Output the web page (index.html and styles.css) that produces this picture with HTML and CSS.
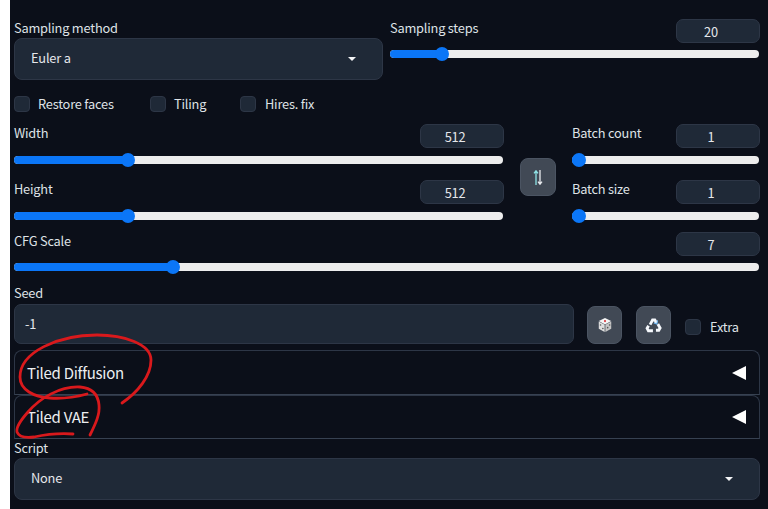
FILE: index.html
```html
<!DOCTYPE html>
<html lang="en">
<head>
<meta charset="utf-8">
<title>txt2img settings</title>
<link rel="stylesheet" href="styles.css">
</head>
<body>
<main class="panel">
  <section class="top-row">
    <div class="method-col">
      <div class="label method-label">Sampling method</div>
      <div class="select"><span>Euler a</span><i class="caret"></i></div>
    </div>
    <div class="steps-col">
      <div class="head"><span class="label">Sampling steps</span><span class="num">20</span></div>
      <div class="slider"><div class="fill" style="width:14.2%"></div></div>
    </div>
  </section>

  <section class="checks">
    <label class="check c1"><i class="box"></i><span class="check-text">Restore faces</span></label>
    <label class="check c2"><i class="box"></i><span class="check-text">Tiling</span></label>
    <label class="check"><i class="box"></i><span class="check-text">Hires. fix</span></label>
  </section>

  <section class="size-row">
    <div class="size-col">
      <div class="head"><span class="label">Width</span><span class="num">512</span></div>
      <div class="slider"><div class="fill" style="width:23.3%"></div></div>
      <div class="head second"><span class="label">Height</span><span class="num">512</span></div>
      <div class="slider"><div class="fill" style="width:23.3%"></div></div>
    </div>
    <button class="tool swap" type="button" aria-label="Swap">
      <svg width="10" height="15" viewBox="0 0 10 15"><path d="M3 15V1M1 3.4 3 .8l2 2.6" fill="none" stroke="#8fe3e6" stroke-width="1.3"/><path d="M7 0v14M5 11.6 7 14.2l2-2.6" fill="none" stroke="#e8eaee" stroke-width="1.3"/></svg>
    </button>
    <div class="batch-col">
      <div class="head"><span class="label">Batch count</span><span class="num">1</span></div>
      <div class="slider"><div class="fill" style="width:0"></div></div>
      <div class="head second"><span class="label">Batch size</span><span class="num">1</span></div>
      <div class="slider"><div class="fill" style="width:0"></div></div>
    </div>
  </section>

  <section class="cfg">
    <div class="head"><span class="label">CFG Scale</span><span class="num">7</span></div>
    <div class="slider cfg-slider"><div class="fill" style="width:21.3%"></div></div>
  </section>

  <section class="seed">
    <div class="seed-col">
      <div class="label">Seed</div>
      <div class="seed-input">-1</div>
    </div>
    <button class="tool dice" type="button" aria-label="Random seed">
      <svg width="16" height="16" viewBox="0 0 18 18">
        <path d="M9 1 16 4.6 9 8.4 2 4.6Z" fill="#f4f4f4"/>
        <path d="M2 5 8.6 8.8V17L2 13.2Z" fill="#dedede"/>
        <path d="M16 5 9.4 8.8V17L16 13.2Z" fill="#c4c4c4"/>
        <circle cx="9" cy="4.6" r="1.2" fill="#d9363e"/>
        <circle cx="4" cy="9" r=".9" fill="#555"/><circle cx="6.6" cy="13" r=".9" fill="#555"/>
        <circle cx="12" cy="12" r=".9" fill="#555"/><circle cx="14.2" cy="9" r=".9" fill="#555"/>
      </svg>
    </button>
    <button class="tool recycle" type="button" aria-label="Reuse seed">
      <svg width="17" height="17" viewBox="0 0 18 18" fill="none" stroke="#f5f8fc" stroke-width="3">
        <path d="M5.4 8 8 3.2h2.4l1.6 2.6"/>
        <path d="M13.6 7.4l2.4 4.2-1.4 2.4h-3"/>
        <path d="M8.4 14.6H3.6L2.2 12l1.6-2.8"/>
        <path d="M13.2 3.6 12.6 7.4 9.4 6.2" stroke="#6fb7f2" stroke-width="1.2" fill="#f5f8fc"/>
      </svg>
    </button>
    <label class="check extra"><i class="box"></i><span class="check-text">Extra</span></label>
  </section>

  <section class="accordion"><span>Tiled Diffusion</span><i class="tri"></i></section>
  <section class="accordion next"><span>Tiled VAE</span><i class="tri"></i></section>

  <section class="script">
    <div class="label">Script</div>
    <div class="select"><span>None</span><i class="caret"></i></div>
  </section>
</main>
<svg class="ink" width="768" height="509" viewBox="0 0 768 509" fill="none" stroke="#d9191c" stroke-linecap="round" aria-hidden="true">
  <path stroke-width="2.8" d="M122 403C138 392 151 376 151 360C151 344 124 335 97 335C58 335 20 352 20 377C20 390 34 397 50 398C64 399 76 397 87 394"/>
  <path stroke-width="2.8" d="M90 435C96 423 100 414 99 405C98 394 92 388 80 387C60 386 40 398 28 412C20 421 16 428 17 432C19 437 26 438 34 437C48 434 60 433 73 434"/>
</svg>
</body>
</html>
```
FILE: styles.css
```css
* { box-sizing: border-box; }
html, body { margin: 0; height: 100%; background: #fff; overflow: hidden; }
body { font-family: "Noto Sans CJK SC", "Noto Sans", sans-serif; color: #e5e7eb; }

.panel {
  margin-left: 10px;
  height: 509px;
  background: #0b0f19;
  padding: 19px 8px 0 4px;
  font-size: 12.8px;
  line-height: 18px;
  letter-spacing: -.2px;
}

.label { color: #dfe2e6; line-height: 17px; }

.top-row { display: flex; gap: 7px; height: 61px; }
.method-col { width: 369px; }
.method-label { margin-bottom: 2px; }
.steps-col { flex: 1; }

.select {
  height: 42px;
  display: flex;
  align-items: center;
  justify-content: space-between;
  padding: 0 26px 2px 16px;
  background: #1f2937;
  border: 1px solid #2d3646;
  border-radius: 8px;
  color: #e5e7eb;
}
.caret { width: 0; height: 0; margin-top: 2px; border: 4px solid transparent; border-top: 4px solid #f3f4f6; border-bottom: 0; }

.head { display: flex; justify-content: space-between; height: 24px; }
.num {
  width: 84px;
  height: 24px;
  padding-right: 14px;
  background: #1f2937;
  border: 1px solid #2d3646;
  border-radius: 7px;
  text-align: center;
  line-height: 23px;
  color: #e5e7eb;
}

.slider {
  position: relative;
  height: 8px;
  margin: 8px 1px 0 0;
  background: #ededed;
  border-radius: 4px;
}
.top-row .slider, .cfg-slider { margin-top: 7px; }
.fill { position: relative; height: 100%; background: #0b76f7; border-radius: 4px 0 0 4px; min-width: 7px; }
.fill::after {
  content: "";
  position: absolute;
  right: -7px;
  top: -3px;
  width: 14px;
  height: 14px;
  border-radius: 50%;
  background: #0b76f7;
}

.checks { display: flex; margin-top: 16px; height: 16px; align-items: center; }
.check { display: flex; align-items: center; color: #dfe2e6; line-height: 15px; }
.check-text { padding-bottom: 2px; }
.box {
  width: 16px;
  height: 16px;
  margin-right: 8px;
  background: #1f2937;
  border: 1px solid #2d3646;
  border-radius: 4px;
}
.c1 { width: 136px; }
.c2 { width: 90px; }
.checks .check:last-child .box { margin-right: 9px; }

.size-row { display: flex; margin-top: 12px; height: 108px; }
.size-col { width: 490px; }
.second { margin-top: 16px; }
.tool {
  width: 35px;
  height: 38px;
  padding: 0;
  display: flex;
  align-items: center;
  justify-content: center;
  background: #414955;
  border: 1px solid #4b5462;
  border-radius: 8px;
}
.swap { margin: 34px 16px 0 16px; flex: none; width: 36px; }
.batch-col { flex: 1; }

.seed { display: flex; margin-top: 13px; height: 60px; }
.seed-col { width: 560px; margin-right: 13px; }
.seed-col .label { height: 20px; }
.seed-input {
  height: 40px;
  background: #1f2937;
  border: 1px solid #2d3646;
  border-radius: 7px;
  padding-left: 10px;
  line-height: 37px;
  color: #e5e7eb;
}
.dice { margin: 22px 14px 0 0; flex: none; }
.recycle { margin: 22px 14px 0 0; flex: none; }
.extra { align-self: flex-start; margin-top: 35px; height: 16px; }
.extra .box { margin-right: 9px; }

.accordion {
  display: flex;
  align-items: center;
  justify-content: space-between;
  height: 45px;
  margin-top: 6px;
  padding: 0 13px 0 12px;
  border: 1px solid #2d3646;
  border-bottom-color: #374151;
  border-radius: 8px 8px 0 0;
  font-size: 15px;
  letter-spacing: -.28px;
  color: #eceef1;
}
.accordion.next { margin-top: 0; height: 44px; }
.tri { width: 0; height: 0; border-style: solid; border-width: 7.5px 14px 7.5px 0; border-color: transparent #fff transparent transparent; }

.script .label { height: 19px; }

.ink { position: absolute; left: 0; top: 0; pointer-events: none; }
```
